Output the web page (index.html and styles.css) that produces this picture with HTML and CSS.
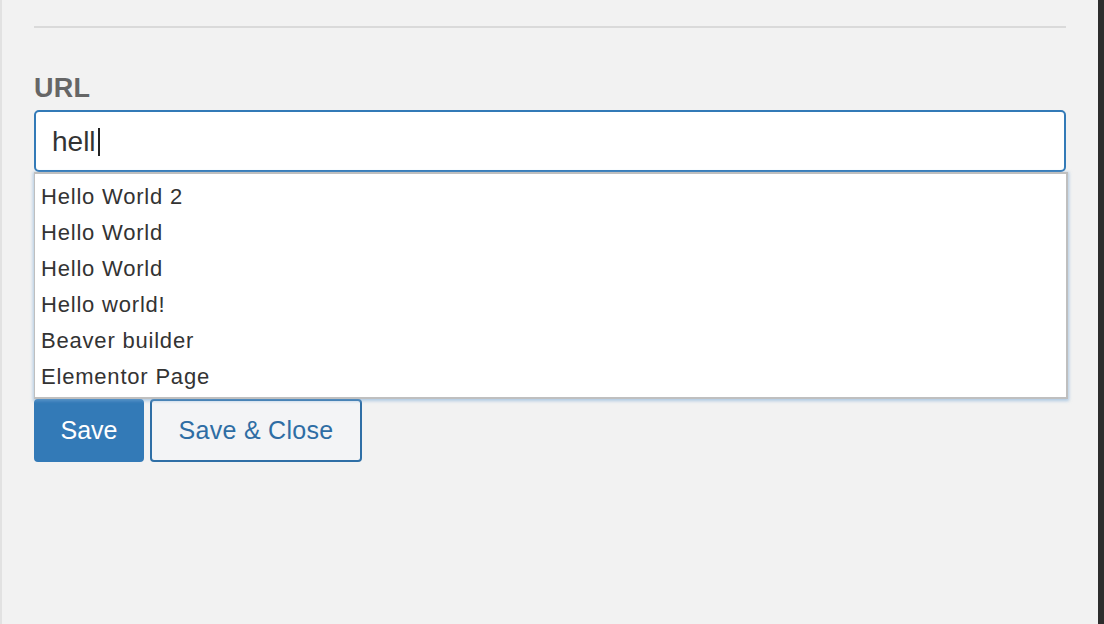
FILE: index.html
```html
<!DOCTYPE html>
<html>
<head>
<meta charset="utf-8">
<link rel="stylesheet" href="styles.css">
</head>
<body>
<div class="frame">
  <div class="panel">
    <hr class="divider">
    <div class="field">
      <label class="label">URL</label>
      <div class="input-wrap">
        <div class="input"><span class="value">hell</span><span class="caret"></span></div>
        <ul class="suggestions">
          <li>Hello World 2</li>
          <li>Hello World</li>
          <li>Hello World</li>
          <li>Hello world!</li>
          <li>Beaver builder</li>
          <li>Elementor Page</li>
        </ul>
      </div>
    </div>
    <div class="actions">
      <button class="btn btn-primary">Save</button>
      <button class="btn btn-outline">Save &amp; Close</button>
    </div>
  </div>
  <div class="edge"></div>
</div>
</body>
</html>
```

FILE: styles.css
```css
* { box-sizing: border-box; }
html, body { margin: 0; padding: 0; }
body {
  width: 1104px;
  height: 624px;
  overflow: hidden;
  background: #f2f2f2;
  font-family: "Liberation Sans", Arial, sans-serif;
}
.frame {
  display: flex;
  height: 624px;
}
.panel {
  flex: 1;
  border-left: 2px solid #e2e2e2;
  padding: 26px 32px 0 32px;
  background: #f2f2f2;
}
.edge {
  width: 6px;
  background: #2d2d2d;
}
.divider {
  margin: 0;
  border: 0;
  border-top: 2px solid #dadada;
  height: 0;
}
.field {
  margin-top: 44px;
}
.label {
  display: block;
  font-size: 27px;
  line-height: 32px;
  font-weight: bold;
  color: #666666;
  letter-spacing: 0.3px;
}
.input-wrap {
  position: relative;
  margin-top: 6px;
}
.input {
  height: 62px;
  border: 2px solid #337ab7;
  border-radius: 5px;
  background: #ffffff;
  padding: 2px 16px 0 16px;
  display: flex;
  align-items: center;
  font-size: 28px;
  color: #333333;
}
.caret {
  display: inline-block;
  width: 2px;
  height: 28px;
  margin-left: 2px;
  background: #222222;
}
.suggestions {
  position: absolute;
  top: 62px;
  left: 0;
  width: 1034px;
  margin: 0;
  padding: 5px 0 2px 0;
  list-style: none;
  background: #ffffff;
  border: 1px solid #bfbfbf;
  border-top-width: 2px;
  border-right-width: 2px;
  border-bottom-width: 2px;
  box-shadow: 0 1px 3px 1px rgba(120, 170, 215, 0.55);
  z-index: 2;
}
.suggestions li {
  font-size: 22px;
  letter-spacing: 0.8px;
  line-height: 36px;
  height: 36px;
  padding-left: 6px;
  color: #333333;
}
.actions {
  display: flex;
  gap: 6px;
  margin-top: 227px;
}
.btn {
  height: 63px;
  border-radius: 4px;
  font-family: "Liberation Sans", Arial, sans-serif;
  font-size: 25px;
  padding: 0;
  cursor: pointer;
}
.btn-primary {
  width: 110px;
  background: #337ab7;
  border: 2px solid #337ab7;
  color: #ffffff;
}
.btn-outline {
  width: 212px;
  background: #f3f4f6;
  border: 2px solid #2f6fa6;
  color: #2e6da4;
  letter-spacing: 0.3px;
}
```
